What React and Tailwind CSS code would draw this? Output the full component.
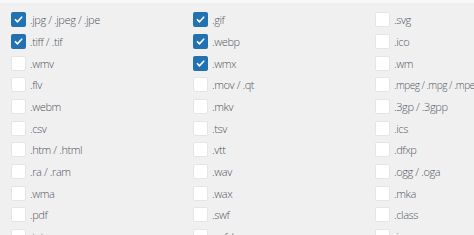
import { useState } from "react";

const rows = [
  [".jpg / .jpeg / .jpe", ".gif", ".svg"],
  [".tiff / .tif", ".webp", ".ico"],
  [".wmv", ".wmx", ".wm"],
  [".flv", ".mov / .qt", ".mpeg / .mpg / .mpe"],
  [".webm", ".mkv", ".3gp / .3gpp"],
  [".csv", ".tsv", ".ics"],
  [".htm / .html", ".vtt", ".dfxp"],
  [".ra / .ram", ".wav", ".ogg / .oga"],
  [".wma", ".wax", ".mka"],
  [".pdf", ".swf", ".class"],
  [".txt", ".asf / .asx", ".js"],
];

const initialChecked = [".jpg / .jpeg / .jpe", ".gif", ".tiff / .tif", ".webp", ".wmx"];

function Box({ checked }) {
  return checked ? (
    <span className="flex h-[15px] w-[15px] shrink-0 items-center justify-center rounded-[2px] bg-[#2271b1]">
      <svg width="11" height="11" viewBox="0 0 10 10" fill="none">
        <path d="M2.2 5.2l1.9 1.9 3.8-4.2" stroke="white" strokeWidth="1.5" strokeLinecap="round" strokeLinejoin="round" />
      </svg>
    </span>
  ) : (
    <span className="h-[15px] w-[15px] shrink-0 rounded-[2px] border border-[#e4e5e7] bg-white" />
  );
}

export default function App() {
  const [checked, setChecked] = useState(initialChecked);

  const toggle = (ext) =>
    setChecked((prev) => (prev.includes(ext) ? prev.filter((e) => e !== ext) : [...prev, ext]));

  return (
    <div
      className="h-[235px] w-[474px] overflow-hidden border-t-[3px] border-[#f6f7f7] bg-[#f0f0f1] pl-[11px] pt-[6px]"
      style={{ fontFamily: "'Open Sans', 'Noto Sans', sans-serif" }}
    >
      <div className="grid grid-cols-[182px_182px_1fr] auto-rows-[21.67px]">
        {rows.flat().map((ext) => (
          <label
            key={ext}
            onClick={() => toggle(ext)}
            className="flex cursor-pointer items-center gap-[4px] whitespace-nowrap text-[11px] font-light tracking-[-0.4px] text-[#50575e]"
          >
            <Box checked={checked.includes(ext)} />
            <span
              className={
                ext.length > 17 && ext.startsWith(".mpeg")
                  ? "leading-none text-[10px] tracking-[-0.5px]"
                  : "leading-none"
              }
            >
              {ext}
            </span>
          </label>
        ))}
      </div>
    </div>
  );
}
